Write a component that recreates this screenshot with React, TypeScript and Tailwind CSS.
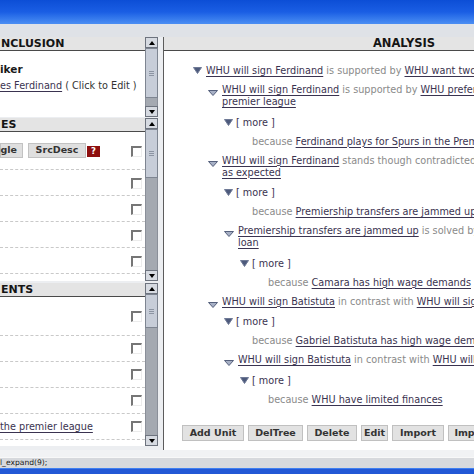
import type { ReactNode } from 'react';

type Seg = { t: string; link?: boolean };
type Kind = 'root' | 'node' | 'more' | 'because';

interface TreeRow {
    kind: Kind;
    pad: string;
    lines?: Seg[][];
}

const L = (t: string): Seg => ({ t, link: true });
const G = (t: string): Seg => ({ t });

const rows: TreeRow[] = [
    {
        kind: 'root',
        pad: 'pl-[29px]',
        lines: [[L('WHU will sign Ferdinand'), G(' is supported by '), L('WHU want two new centre backs')]],
    },
    {
        kind: 'node',
        pad: 'pl-[44px]',
        lines: [
            [L('WHU will sign Ferdinand'), G(' is supported by '), L('WHU prefer players who have played in the')],
            [L('premier league')],
        ],
    },
    { kind: 'more', pad: 'pl-[60px]' },
    {
        kind: 'because',
        pad: 'pl-[88px]',
        lines: [[G('because '), L('Ferdinand plays for Spurs in the Premiership')]],
    },
    {
        kind: 'node',
        pad: 'pl-[44px]',
        lines: [
            [L('WHU will sign Ferdinand'), G(' stands though contradicted by '), L('Transfers do not always go')],
            [L('as expected')],
        ],
    },
    { kind: 'more', pad: 'pl-[60px]' },
    {
        kind: 'because',
        pad: 'pl-[88px]',
        lines: [[G('because '), L('Premiership transfers are jammed up')]],
    },
    {
        kind: 'node',
        pad: 'pl-[60px]',
        lines: [
            [L('Premiership transfers are jammed up'), G(' is solved by '), L('WHU can sign Ferdinand on')],
            [L('loan')],
        ],
    },
    { kind: 'more', pad: 'pl-[76px]' },
    {
        kind: 'because',
        pad: 'pl-[104px]',
        lines: [[G('because '), L('Camara has high wage demands')]],
    },
    {
        kind: 'node',
        pad: 'pl-[44px]',
        lines: [[L('WHU will sign Batistuta'), G(' in contrast with '), L('WHU will sign Ferdinand')]],
    },
    { kind: 'more', pad: 'pl-[60px]' },
    {
        kind: 'because',
        pad: 'pl-[88px]',
        lines: [[G('because '), L('Gabriel Batistuta has high wage demands')]],
    },
    {
        kind: 'node',
        pad: 'pl-[60px]',
        lines: [[L('WHU will sign Batistuta'), G(' in contrast with '), L('WHU will sign Camara')]],
    },
    { kind: 'more', pad: 'pl-[76px]' },
    {
        kind: 'because',
        pad: 'pl-[104px]',
        lines: [[G('because '), L('WHU have limited finances')]],
    },
];

const toolButtons = [
    { label: 'Add Unit', w: 'w-[62px]' },
    { label: 'DelTree', w: 'w-[55px]' },
    { label: 'Delete', w: 'w-[50px]' },
    { label: 'Edit', w: 'w-[27px]' },
    { label: 'Import', w: 'w-[52px]' },
    { label: 'Import All', w: 'w-[66px]' },
];

function FilledArrow() {
    return (
        <svg width="9" height="7" viewBox="0 0 9 7">
            <polygon points="0.5,0.5 8.5,0.5 4.5,6.5" fill="#4d5a7c" stroke="#6f7a96" strokeWidth="1" />
        </svg>
    );
}

function FlatArrow() {
    return (
        <svg width="10" height="6" viewBox="0 0 10 6">
            <polygon points="0.5,0.5 9.5,0.5 5,5.5" fill="#a7b0c5" stroke="#55607c" strokeWidth="1" />
        </svg>
    );
}

function Segs({ segs }: { segs: Seg[] }) {
    return (
        <div className="whitespace-nowrap leading-[12px]">
            {segs.map((s, i) =>
                s.link ? (
                    <span key={i} className="text-[#3a3350] underline decoration-1 underline-offset-[1.5px]">
                        {s.t}
                    </span>
                ) : (
                    <span key={i} className="text-[#8a8a8a]">
                        {s.t}
                    </span>
                ),
            )}
        </div>
    );
}

function Row({ row }: { row: TreeRow }) {
    if (row.kind === 'more') {
        return (
            <div className={`mt-[1.5px] flex ${row.pad}`}>
                <span className="flex w-[12px] shrink-0 pt-[2px]">
                    <FilledArrow />
                </span>
                <div className="whitespace-nowrap leading-[12px] text-[#3a3350]">[ more ]</div>
            </div>
        );
    }
    if (row.kind === 'because') {
        return (
            <div className={row.pad}>
                <Segs segs={row.lines![0]} />
            </div>
        );
    }
    const root = row.kind === 'root';
    return (
        <div className={`flex ${row.pad}`}>
            {root ? (
                <span className="flex w-[13px] shrink-0 pt-[2px]">
                    <FilledArrow />
                </span>
            ) : (
                <span className="flex w-[14px] shrink-0 pt-[6px]">
                    <FlatArrow />
                </span>
            )}
            <div className="flex flex-col">
                {row.lines!.map((l, i) => (
                    <Segs key={i} segs={l} />
                ))}
            </div>
        </div>
    );
}

function ScrollButton({ up }: { up?: boolean }) {
    return (
        <div className="flex h-[11px] shrink-0 items-center justify-center border border-[#6d737e] bg-[#d6dae1]">
            <svg width="6" height="4" viewBox="0 0 6 4">
                <polygon points={up ? '0,4 6,4 3,0' : '0,0 6,0 3,4'} fill="#000" />
            </svg>
        </div>
    );
}

function Scrollbar({ thumb }: { thumb: string }) {
    return (
        <div className="flex w-[13px] shrink-0 flex-col bg-[#a4a9b1]">
            <ScrollButton up />
            <div className={`flex ${thumb} shrink-0 flex-col items-center justify-center gap-[1px] border border-[#7e8591] bg-[#c7cdd8]`}>
                <span className="h-[1px] w-[5px] bg-[#8c94a2]" />
                <span className="h-[1px] w-[5px] bg-[#8c94a2]" />
                <span className="h-[1px] w-[5px] bg-[#8c94a2]" />
            </div>
            <div className="flex-1 border-x border-[#8a8f99]" />
            <ScrollButton />
        </div>
    );
}

function Checkbox() {
    return (
        <span className="h-[11px] w-[11px] shrink-0 border-t-[2px] border-l-[2px] border-r border-b border-t-[#767676] border-l-[#767676] border-r-[#ececec] border-b-[#ececec] bg-white" />
    );
}

function Section({
    title,
    height,
    thumb,
    children,
}: {
    title: string;
    height: string;
    thumb: string;
    children: ReactNode;
}) {
    return (
        <div className={`flex ${height} shrink-0`}>
            <div className="flex w-[145px] flex-col overflow-hidden bg-white">
                <div className="h-[14px] shrink-0 whitespace-nowrap border-b border-[#4a4a4a] bg-[#e4e4e4] pl-[1px] text-[11px] font-bold leading-[13px] text-[#151515]">
                    {title}
                </div>
                {children}
            </div>
            <Scrollbar thumb={thumb} />
        </div>
    );
}

function CheckRow({ height, top, children }: { height: string; top: string; children?: ReactNode }) {
    return (
        <div className={`flex ${height} ${top} shrink-0 items-start border-b border-dashed border-[#c9c9c9] pr-[3px]`}>
            <div className="flex-1 whitespace-nowrap leading-[12px]">{children}</div>
            <Checkbox />
        </div>
    );
}

export default function App() {
    return (
        <div className="flex h-[474px] w-[474px] flex-col overflow-hidden bg-[#eceef1] font-['DejaVu_Sans',sans-serif] text-[9.7px]">
            <div className="h-[24px] shrink-0 bg-gradient-to-b from-[#0c4ed6] via-[#1a5ee4] to-[#4b8ef3]" />
            <div className="h-[13px] shrink-0 bg-[#dfe2e7]" />

            <div className="flex h-[413px] shrink-0">
                <div className="flex w-[158px] shrink-0 flex-col">
                    <Section title="NCLUSION" height="h-[80px]" thumb="h-[50px]">
                        <div className="pt-[12px] text-[10.5px] font-bold leading-[13px] text-[#1a1a1a]">iker</div>
                        <div className="mt-[3.5px] whitespace-nowrap leading-[12px]">
                            <span className="text-[#3a3350] underline decoration-1 underline-offset-[1.5px]">es Ferdinand</span>
                            <span className="text-[#333]"> ( Click to Edit )</span>
                        </div>
                    </Section>

                    <div className="mt-[1px]">
                        <Section title="ES" height="h-[163px]" thumb="h-[49px]">
                            <div className="flex h-[38px] shrink-0 items-start border-b border-dashed border-[#c9c9c9] pt-[11px] pr-[3px]">
                                <div className="flex h-[15px] w-[23px] items-center justify-end border border-[#c2c2c2] bg-[#dfdfdf] pr-[5px] text-[9.5px] font-bold text-[#333]">
                                    ggle
                                </div>
                                <div className="ml-[5px] flex h-[15px] w-[58px] items-center justify-center border border-[#c2c2c2] bg-[#dfdfdf] text-[9.5px] font-bold text-[#333]">
                                    SrcDesc
                                </div>
                                <div className="ml-[1px] mt-[3px] flex h-[11px] w-[13px] items-center justify-center bg-[#8e0f0f] text-[8.5px] font-bold text-white">
                                    ?
                                </div>
                                <span className="ml-auto mt-[3px] flex">
                                    <Checkbox />
                                </span>
                            </div>
                            <CheckRow height="h-[26px]" top="pt-[8px]" />
                            <CheckRow height="h-[26px]" top="pt-[8px]" />
                            <CheckRow height="h-[26px]" top="pt-[8px]" />
                            <CheckRow height="h-[26px]" top="pt-[8px]" />
                        </Section>
                    </div>

                    <div className="mt-[2px]">
                        <Section title="ENTS" height="h-[163px]" thumb="h-[34px]">
                            <CheckRow height="h-[39px]" top="pt-[14px]" />
                            <CheckRow height="h-[26px]" top="pt-[7px]" />
                            <CheckRow height="h-[26px]" top="pt-[7px]" />
                            <CheckRow height="h-[26px]" top="pt-[7px]" />
                            <CheckRow height="h-[26px]" top="pt-[7px]">
                                <span className="text-[#3a3350] underline decoration-1 underline-offset-[1.5px]">
                                    the premier league
                                </span>
                            </CheckRow>
                        </Section>
                    </div>
                </div>

                <div className="w-[5px] shrink-0" />

                <div className="flex w-[481px] shrink-0 flex-col border-l border-[#5c5c5c] bg-white">
                    <div className="h-[14px] shrink-0 border-b border-[#4a4a4a] bg-[#e4e4e4] text-center text-[11.5px] font-bold leading-[13px] text-[#151515]">
                        ANALYSIS
                    </div>
                    <div className="flex flex-col gap-[7px] pt-[14px]">
                        {rows.map((r, i) => (
                            <Row key={i} row={r} />
                        ))}
                    </div>
                    <div className="mt-auto flex gap-[4px] pb-[9px] pl-[18px]">
                        {toolButtons.map((b) => (
                            <div
                                key={b.label}
                                className={`flex h-[16px] ${b.w} shrink-0 items-center justify-center whitespace-nowrap border border-[#c0c0c0] bg-[#e2e2e2] text-[9.5px] font-bold text-[#333]`}
                            >
                                {b.label}
                            </div>
                        ))}
                    </div>
                </div>
            </div>

            <div className="h-[7px] shrink-0 bg-[#f1f2f4]" />
            <div className="flex h-[11px] shrink-0 items-center border-t border-[#f8f8f8] bg-[#d7d9dd] text-[7.6px] leading-[10px] text-[#222]">
                l_expand(9);
            </div>
            <div className="h-[6px] shrink-0 border-t border-[#3f7ff0] bg-[#2258d6]" />
        </div>
    );
}
